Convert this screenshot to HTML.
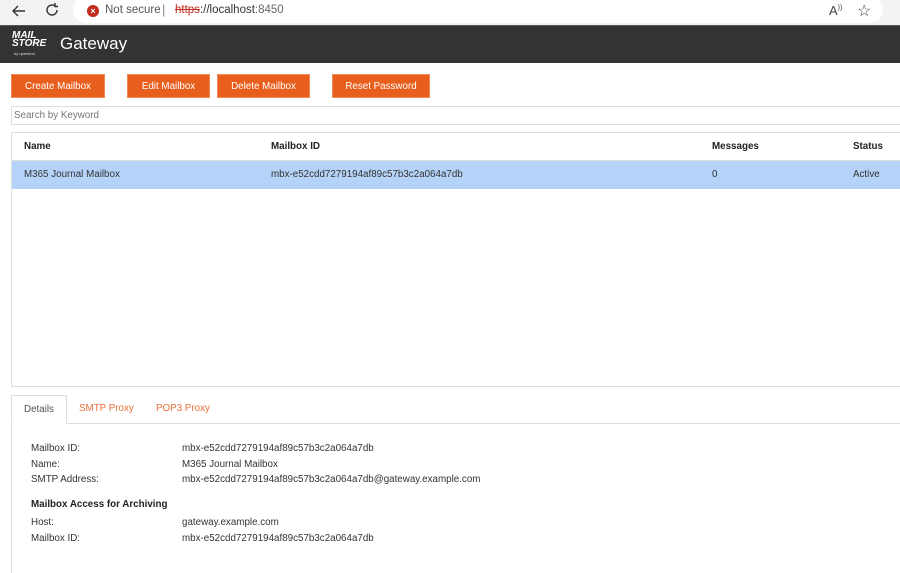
<!DOCTYPE html>
<html><head><style>
*{margin:0;padding:0;box-sizing:border-box}
body{width:900px;height:573px;overflow:hidden;background:#fff;font-family:"Liberation Sans",sans-serif;font-size:9.8px;color:#333;position:relative}
.abs{position:absolute}
.chrome{left:0;top:0;width:900px;height:25px;background:#f3f3f3}
.addr{left:73px;top:-4px;width:810px;height:27px;background:#fff;border-radius:14px}
.hdr{left:0;top:25px;width:900px;height:38px;background:#333;border-top:1px solid #555}
.btn{top:74px;height:24px;background:#e85e1d;color:#fff;font-size:9.8px;line-height:23px;text-align:center;border:1px solid #f08a5a}
</style></head><body>
<div class="abs chrome"></div>
<div class="abs addr"></div>
<svg class="abs" style="left:10px;top:3px" width="18" height="16" viewBox="0 0 18 16"><path d="M15 8H3M8 3L3 8l5 5" stroke="#333" stroke-width="1.4" fill="none"/></svg>
<svg class="abs" style="left:44px;top:2px" width="16" height="16" viewBox="0 0 16 16"><path d="M13 8a5 5 0 1 1-2-4M11 1v3.5h3" stroke="#333" stroke-width="1.4" fill="none"/></svg>
<div class="abs" style="left:87px;top:5px;width:12px;height:12px;border-radius:50%;background:#c42b1c;color:#fff;font-size:9px;line-height:12px;text-align:center;font-weight:bold">×</div>
<div class="abs" style="left:105px;top:4px;font-size:11.5px;color:#555">Not secure</div>
<div class="abs" style="left:162px;top:2px;font-size:13px;color:#888">|</div>
<div class="abs" style="left:175px;top:4px;font-size:11.5px;color:#333"><span style="color:#c42b1c;text-decoration:line-through">https</span>://localhost<span style="color:#666">:8450</span></div>
<div class="abs" style="left:829px;top:3px;font-size:13px;color:#444">A<sup style="font-size:7px">))</sup></div>
<div class="abs" style="left:857px;top:1px;font-size:16px;color:#444">☆</div>
<div class="abs hdr"></div>
<div class="abs" style="left:12px;top:32px;color:#fff;font-weight:bold;font-style:italic;font-size:10px;line-height:8px">MAIL<br>STORE</div>
<div class="abs" style="left:14px;top:51px;color:#ddd;font-size:4px">by opentext</div>
<div class="abs" style="left:60px;top:34px;color:#fff;font-size:17px">Gateway</div>
<div class="abs btn" style="left:11px;width:94px">Create Mailbox</div>
<div class="abs btn" style="left:127px;width:83px">Edit Mailbox</div>
<div class="abs btn" style="left:217px;width:93px">Delete Mailbox</div>
<div class="abs btn" style="left:332px;width:98px">Reset Password</div>
<div class="abs" style="left:11px;top:106px;width:889px;height:19px;border:1px solid #ddd;border-right:none;color:#777;padding:3px 2px">Search by Keyword</div>
<div class="abs" style="left:11px;top:132px;width:889px;height:255px;border:1px solid #ddd;border-right:none"></div>
<div class="abs" style="left:12px;top:133px;width:888px;height:28px;border-bottom:1px solid #ddd;font-weight:bold;color:#222">
<span class="abs" style="left:12px;top:8px">Name</span><span class="abs" style="left:259px;top:8px">Mailbox ID</span><span class="abs" style="left:700px;top:8px">Messages</span><span class="abs" style="left:841px;top:8px">Status</span></div>
<div class="abs" style="left:12px;top:161px;width:888px;height:28px;background:#b5d3f8;color:#333">
<span class="abs" style="left:12px;top:8px">M365 Journal Mailbox</span><span class="abs" style="left:259px;top:8px">mbx-e52cdd7279194af89c57b3c2a064a7db</span><span class="abs" style="left:700px;top:8px">0</span><span class="abs" style="left:841px;top:8px">Active</span></div>
<div class="abs" style="left:11px;top:423px;width:889px;height:1px;background:#ddd"></div>
<div class="abs" style="left:11px;top:395px;width:56px;height:29px;border:1px solid #ddd;border-bottom:1px solid #fff;background:#fff;color:#555;padding:8px 0 0 12px">Details</div>
<div class="abs" style="left:79px;top:403px;color:#e8703a">SMTP Proxy</div>
<div class="abs" style="left:156px;top:403px;color:#e8703a">POP3 Proxy</div>
<div class="abs" style="left:11px;top:424px;width:1px;height:149px;background:#ddd"></div>
<div class="abs" style="left:31px;top:441px;line-height:15.7px">Mailbox ID:<br>Name:<br>SMTP Address:</div>
<div class="abs" style="left:182px;top:441px;line-height:15.7px">mbx-e52cdd7279194af89c57b3c2a064a7db<br>M365 Journal Mailbox<br>mbx-e52cdd7279194af89c57b3c2a064a7db@gateway.example.com</div>
<div class="abs" style="left:31px;top:499px;font-weight:bold;color:#222">Mailbox Access for Archiving</div>
<div class="abs" style="left:31px;top:515px;line-height:16px">Host:<br>Mailbox ID:</div>
<div class="abs" style="left:182px;top:515px;line-height:16px">gateway.example.com<br>mbx-e52cdd7279194af89c57b3c2a064a7db</div>
</body></html>
